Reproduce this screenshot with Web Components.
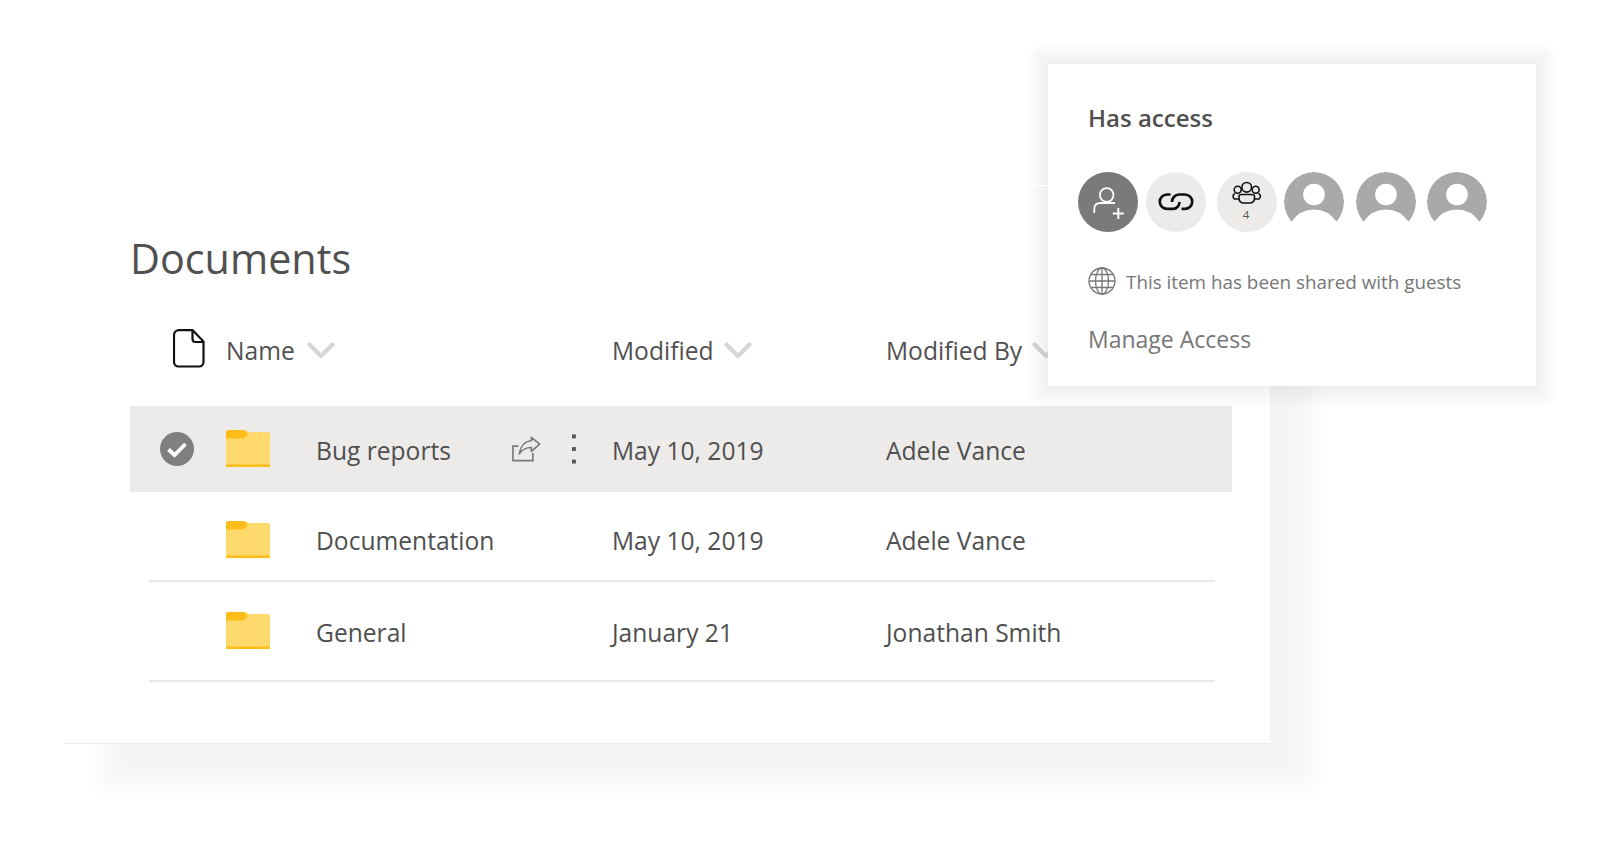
<!DOCTYPE html>
<html lang="en"><head><meta charset="utf-8"><title>Documents</title>
<style>
html,body{margin:0;height:854px;background:#fff;overflow:hidden}
body{font-family:"Open Sans","Noto Sans",sans-serif;color:#4f4f4f;position:relative}
</style></head><body>
<doc-library>
  <span slot="title">Documents</span>
  <doc-header></doc-header>
  <doc-row name="Bug reports" date="May 10, 2019" by="Adele Vance" selected></doc-row>
  <doc-row name="Documentation" date="May 10, 2019" by="Adele Vance" ruled></doc-row>
  <doc-row name="General" date="January 21" by="Jonathan Smith" ruled last></doc-row>
</doc-library>
<access-panel>
  <span slot="title">Has access</span>
  <access-avatar kind="add"></access-avatar>
  <access-avatar kind="link" gap="8"></access-avatar>
  <access-avatar kind="group" gap="11" count="4"></access-avatar>
  <access-avatar kind="person" gap="7"></access-avatar>
  <access-avatar kind="person" gap="12"></access-avatar>
  <access-avatar kind="person" gap="11"></access-avatar>
  <span slot="note">This item has been shared with guests</span>
  <span slot="action">Manage Access</span>
</access-panel>
<script>
const CHEV='<svg class="chev" width="28" height="17" viewBox="0 0 28 17" fill="none"><path d="M2.500 2.500 14 14 25.500 2.500" stroke="#d6d6d6" stroke-width="4.200" stroke-linecap="round" stroke-linejoin="round"/></svg>';
const FOLDER='<svg width="44" height="37" viewBox="0 0 44 37"><path d="M0 2.500Q0 0 2.500 0H19L23 2H41.500Q44 2 44 4.500V37H0Z" fill="#ffd96c"/><path d="M0 2.500Q0 0 2.500 0H18L22 4 18 8.500H0Z" fill="#ffbd1a"/><rect y="34.500" width="44" height="2.500" fill="#ffbd1a"/></svg>';
function def(name,html){
  customElements.define(name,class extends HTMLElement{
    connectedCallback(){
      if(this.shadowRoot)return;
      const r=this.attachShadow({mode:'open'});
      r.innerHTML=typeof html==='function'?html(this):html;
    }
  });
}
def('doc-library',`<style>
:host{display:block;position:relative;box-sizing:border-box;width:1206px;height:559px;margin:185px 0 0 64px;background:#fff;border-bottom:1px solid #ebebeb;box-shadow:40px 41px 20px 3px rgba(0,0,0,.04);padding:44px 38px 0 66px}
h1{margin:0;font-weight:400;font-size:41.300px;line-height:58px;color:#505050;height:58px}
</style><h1><slot name="title"></slot></h1><slot></slot>`);
def('doc-header',`<style>
:host{display:grid;grid-template-columns:96px 386px 274px 1fr;align-items:center;height:110px;padding-bottom:2px;margin-top:9px;box-sizing:border-box;font-size:24.600px;color:#505050}
.c{display:flex;align-items:center;gap:10px}
.n .chev{margin-left:2px}
.ic{display:flex;padding-left:43px;margin-bottom:4px}
</style>
<div class="ic"><svg width="32" height="39" viewBox="0 0 32 39" fill="none" stroke="#111" stroke-width="2.200"><path d="M6 1.100H19.500L30.500 12.500V33A4.500 4.500 0 0 1 26 37.500H5.500A4.500 4.500 0 0 1 1 33V6A5 5 0 0 1 6 1.100Z" stroke-linejoin="round"/><path d="M19.500 1.100V10Q19.500 13 22.500 13H30.500" stroke-linejoin="round"/></svg></div>
<div class="c n"><span>Name</span>${CHEV}</div>
<div class="c"><span>Modified</span>${CHEV}</div>
<div class="c"><span>Modified By</span>${CHEV}</div>`);
def('doc-row',h=>{
 const sel=h.hasAttribute('selected'),ruled=h.hasAttribute('ruled'),last=h.hasAttribute('last');
 return `<style>
:host{display:block}
.row{display:grid;grid-template-columns:96px 90px 196px 100px 274px 1fr;align-items:center;box-sizing:border-box;height:${sel?86:last?98:88}px;padding-top:${sel||last?0:8}px;font-size:24.600px;color:#4f4f4f;${sel?'background:#ecebea;':''}}
.rule{height:2px;background:#e9e9e9;margin:0 17px 0 19px}
.check{display:flex;padding-left:30px}
.act{display:flex;align-items:center;gap:31px;justify-content:flex-end;padding-right:36px}
.fol{display:flex;margin-bottom:2px}
.t{padding-top:${sel||last?3:1}px}
svg{display:block}
</style>
<div class="row">
<div class="check">${sel?'<svg width="34" height="34" viewBox="0 0 34 34"><circle cx="17" cy="17" r="17" fill="#807e7e"/><path d="M8.500 17.500 14.500 23 25.500 12" fill="none" stroke="#fff" stroke-width="3.800"/></svg>':''}</div>
<div class="fol">${FOLDER}</div>
<div class="t">${h.getAttribute('name')}</div>
<div class="act">${sel?'<svg width="30" height="26" viewBox="0 0 30 26" fill="none" stroke="#797979" stroke-width="1.700"><path d="M6.500 10H1V25H21.500V17"/><path d="M20 1 28.500 8 20 15.500V11.500C14.500 11.500 10.500 13.500 7.500 18C8.500 10.500 13 5 20 4.500Z" stroke-linejoin="round"/></svg><svg width="4" height="30" viewBox="0 0 4 30"><rect width="4" height="4" fill="#555"/><rect y="13" width="4" height="4" fill="#555"/><rect y="26" width="4" height="4" fill="#555"/></svg>':''}</div>
<div class="t">${h.getAttribute('date')}</div>
<div class="t">${h.getAttribute('by')}</div>
</div>${ruled?'<div class="rule"></div>':''}`});
def('access-panel',`<style>
:host{display:block;position:absolute;left:1048px;top:64px;width:488px;height:322px;box-sizing:border-box;background:#fff;box-shadow:0 0 6px 2px rgba(0,0,0,.03),0 0 10px 15px rgba(0,0,0,.042);padding:0 0 0 30px;color:#767676}
h2{margin:0;font-size:24px;font-weight:600;line-height:34px;color:#505050;padding:37px 0 0 10px}
.av{display:flex;margin-top:37px}
.note{display:flex;align-items:center;gap:10px;margin:34px 0 0 10px;font-size:18.850px;height:30px}
.note span{padding-top:2px}
.act{margin:27px 0 0 10px;font-size:23px;line-height:32px}
.sliver{position:absolute;left:-21px;top:121px;width:21px;height:1px;background:#fff}
</style>
<div class="sliver"></div>
<h2><slot name="title"></slot></h2>
<div class="av"><slot></slot></div>
<div class="note"><svg width="28" height="28" viewBox="0 0 28 28" fill="none" stroke="#777" stroke-width="1.300"><circle cx="14" cy="14" r="13"/><ellipse cx="14" cy="14" rx="6.500" ry="13"/><path d="M14 1V27M1 14H27M3 7.500H25M3 20.500H25"/></svg><span><slot name="note"></slot></span></div>
<div class="act"><slot name="action"></slot></div>`);
def('access-avatar',h=>{
 const k=h.getAttribute('kind'),g=h.getAttribute('gap')||0,n=h.getAttribute('count')||'';
 const bg={add:'#7b7979',link:'#edebe9',group:'#edebe9',person:'transparent'}[k];
 const icons={
 add:'<svg width="60" height="60" viewBox="0 0 60 60" fill="none" stroke="#fff" stroke-width="1.800"><circle cx="28.700" cy="23" r="6.800"/><path d="M16.300 41V37Q16.300 31 22.500 31H37"/><path d="M40.300 36V47M34.800 41.500H45.800" stroke-width="2"/></svg>',
 link:'<svg width="60" height="60" viewBox="0 0 60 60" fill="none" stroke="#111" stroke-width="2.700"><path d="M24.500 22.500H21a7.200 7.200 0 0 0 0 14.400H27C31 36.900 33.500 33.500 33.500 30"/><path d="M35.500 36.900H39a7.200 7.200 0 0 0 0 -14.400H33C29 22.500 26 26 26 30"/></svg>',
 group:'<svg width="60" height="60" viewBox="0 0 60 60" fill="none" stroke="#111" stroke-width="1.600"><circle cx="29.700" cy="15.300" r="4.800"/><circle cx="20.700" cy="17.700" r="3.500"/><circle cx="38.700" cy="17.700" r="3.500"/><path d="M18 21.500C15.500 22.300 15.500 26 17.500 27H22M41.400 21.500C44 22.300 44 26 42 27H37.500"/><path d="M22 24.500Q22 22.500 24.500 22.500H35Q37.500 22.500 37.500 24.500V26C37.500 29.500 35 31 32.500 31H27C24.500 31 22 29.500 22 26Z"/></svg><span class="n">'+n+'</span>',
 person:'<svg width="60" height="60" viewBox="0 0 60 60"><path d="M7.400 49.700A30 30 0 1 1 52.600 49.700Q44 37.500 30 37.500T7.400 49.700Z" fill="#a9a9a9"/><circle cx="30" cy="22.500" r="10.800" fill="#fff"/></svg>'
 };
 return `<style>
:host{display:block;flex:none;position:relative;width:60px;height:60px;margin-left:${g}px;border-radius:50%;overflow:hidden;background:${bg}}
svg{display:block}
.n{position:absolute;left:0;right:2px;top:37px;text-align:center;font-size:11.500px;line-height:12px;color:#555}
</style>${icons[k]}`});
</script>
</body></html>
